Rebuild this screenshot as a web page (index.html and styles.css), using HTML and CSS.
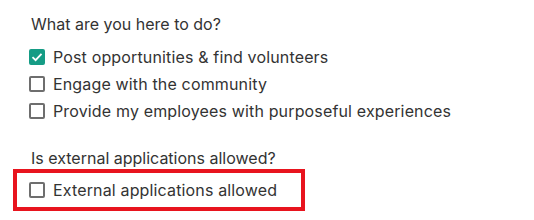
FILE: index.html
```html
<!DOCTYPE html>
<html>
<head>
<meta charset="utf-8">
<link rel="stylesheet" href="styles.css">
</head>
<body>
<div class="form">
  <div class="question">What are you here to do?</div>
  <div class="options">
    <label class="option"><span class="box checked"><svg viewBox="0 0 16 16" width="16" height="16"><path d="M3.5 8.2 L6.6 11.2 L12.5 4.8" fill="none" stroke="#fff" stroke-width="1.8"/></svg></span>Post opportunities &amp; find volunteers</label>
    <label class="option"><span class="box"></span>Engage with the community</label>
    <label class="option"><span class="box"></span>Provide my employees with purposeful experiences</label>
  </div>
  <div class="question second">Is external applications allowed?</div>
  <div class="highlight">
    <label class="option"><span class="box"></span>External applications allowed</label>
  </div>
</div>
</body>
</html>
```
FILE: styles.css
```css
html, body {
  margin: 0;
  padding: 0;
  background: #fff;
}
body {
  font-family: Inter, "Noto Sans", sans-serif;
  font-size: 16px;
  color: #333;
}
.form {
  padding: 14px 0 0 29px;
}
.question {
  padding-left: 2px;
  line-height: 20px;
}
.options {
  margin-top: 13px;
  display: flex;
  flex-direction: column;
  gap: 7px;
}
.option {
  display: flex;
  align-items: center;
  gap: 8px;
  line-height: 20px;
  letter-spacing: 0.15px;
}
.box {
  width: 16px;
  height: 16px;
  box-sizing: border-box;
  border: 2px solid #6e6e6e;
  border-radius: 2px;
  display: inline-block;
  flex: none;
}
.box.checked {
  background: #159c85;
  border-color: #159c85;
  position: relative;
}
.box.checked svg {
  position: absolute;
  left: -2px;
  top: -2px;
}
.question.second {
  margin-top: 27px;
}
.highlight {
  margin: 1px 0 0 -16px;
  width: 272px;
  border: 4px solid #e8141e;
  padding: 7px 0 7px 12px;
}
```
